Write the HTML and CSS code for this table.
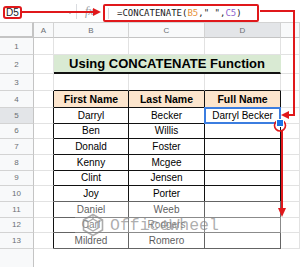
FILE: index.html
```html
<!DOCTYPE html>
<html>
<head>
<meta charset="utf-8">
<link rel="stylesheet" href="styles.css">
</head>
<body>
<div class="app">
  <div class="toolbar">
    <div class="namebox">D5</div>
    <div class="dd"></div>
    <div class="sep"></div>
    <div class="fx">fx</div>
    <div class="formula"><span class="fsep"></span><span class="ftext">=CONCATENATE(<span class="r1">B5</span>," ",<span class="r2">C5</span>)</span></div>
  </div>
  <div class="sheet">
    <div class="c corner"></div><div class="c ch">A</div><div class="c ch">B</div><div class="c ch">C</div><div class="c ch hsel">D</div><div class="c ch"></div>

    <div class="c rh">1</div><div class="c"></div><div class="c"></div><div class="c"></div><div class="c"></div><div class="c"></div>

    <div class="c rh">2</div><div class="c"></div><div class="c title">Using CONCATENATE Function</div><div class="c"></div>

    <div class="c rh">3</div><div class="c"></div><div class="c tt"></div><div class="c tt"></div><div class="c tt"></div><div class="c"></div>

    <div class="c rh">4</div><div class="c tl"></div><div class="c t hd">First Name</div><div class="c t hd">Last Name</div><div class="c t hd">Full Name</div><div class="c"></div>

    <div class="c rh hsel">5</div><div class="c tl"></div><div class="c t">Darryl</div><div class="c t">Becker</div><div class="c t cur">Darryl Becker</div><div class="c"></div>

    <div class="c rh">6</div><div class="c tl"></div><div class="c t">Ben</div><div class="c t">Willis</div><div class="c t"></div><div class="c"></div>

    <div class="c rh">7</div><div class="c tl"></div><div class="c t">Donald</div><div class="c t">Foster</div><div class="c t"></div><div class="c"></div>

    <div class="c rh">8</div><div class="c tl"></div><div class="c t">Kenny</div><div class="c t">Mcgee</div><div class="c t"></div><div class="c"></div>

    <div class="c rh">9</div><div class="c tl"></div><div class="c t">Clint</div><div class="c t">Jensen</div><div class="c t"></div><div class="c"></div>

    <div class="c rh">10</div><div class="c tl"></div><div class="c t">Joy</div><div class="c t">Porter</div><div class="c t"></div><div class="c"></div>

    <div class="c rh">11</div><div class="c tl"></div><div class="c t">Daniel</div><div class="c t">Weeb</div><div class="c t"></div><div class="c"></div>

    <div class="c rh">12</div><div class="c tl"></div><div class="c t">Carl</div><div class="c t">Rodgers</div><div class="c t"></div><div class="c"></div>

    <div class="c rh">13</div><div class="c tl"></div><div class="c t">Mildred</div><div class="c t">Romero</div><div class="c t"></div><div class="c"></div>

    <div class="c rh filler"></div><div class="blank"></div>
  </div>

  <div class="wm">
    <div class="wm-band"></div>
    <svg class="wm-logo" viewBox="0 0 24 24" width="24" height="24">
      <polygon points="12,1.5 21.5,7 21.5,17 12,22.5 2.5,17 2.5,7" fill="none" stroke="#8a8a8a" stroke-width="1.6"/>
      <polygon points="12,6 17,9 17,15 12,18 7,15 7,9" fill="none" stroke="#8a8a8a" stroke-width="1.4"/>
      <path d="M12 1.5 L12 6 M21.5 7 L17 9 M2.5 7 L7 9" stroke="#8a8a8a" stroke-width="1.2" fill="none"/>
    </svg>
    <span class="wm-text">OfficeWheel</span>
  </div>

  <svg class="ann" width="300" height="267" viewBox="0 0 300 267">
    <line x1="22" y1="12" x2="94" y2="12" stroke="#e0181b" stroke-width="2"/>
    <polygon points="93,8 101,12 93,16" fill="#e0181b"/>
    <polyline points="260,11 294,11 294,115 288,115" fill="none" stroke="#e0181b" stroke-width="2"/>
    <polygon points="289,111 281,115 289,119" fill="#e0181b"/>
    <circle cx="280" cy="125.5" r="5.5" fill="none" stroke="#e0181b" stroke-width="1.6"/>
    <line x1="282" y1="131" x2="282" y2="209" stroke="#e0181b" stroke-width="2"/>
    <polygon points="278,208 282,217 286,208" fill="#e0181b"/>
  </svg>
</div>
</body>
</html>
```
FILE: styles.css
```css
* { box-sizing: border-box; margin: 0; padding: 0; }
html, body { width: 300px; height: 267px; overflow: hidden; background: #fff; }
body { font-family: "Liberation Sans", Arial, sans-serif; color: #000; }
.app { position: relative; width: 300px; height: 267px; }

.toolbar { display: flex; align-items: flex-start; height: 22px; }
.namebox {
  margin: 6px 0 0 3px; width: 19px; height: 13px;
  border: 2px solid #e0181b; border-radius: 3px;
  font-size: 10px; line-height: 9px; text-align: center; color: #202124;
}
.dd {
  margin: 11px 0 0 46px; width: 0; height: 0;
  border-left: 2.5px solid transparent; border-right: 2.5px solid transparent;
  border-top: 3px solid #5f6368;
}
.sep { margin: 4px 0 0 4px; width: 1px; height: 15px; background: #dadce0; }
.fx {
  margin: 4px 0 0 8px; width: 12px; font-family: "Liberation Serif", serif;
  font-style: italic; font-size: 12px; color: #9aa0a6;
}
.formula {
  margin: 4px 0 0 6px; width: 156px; height: 18px;
  border: 2px solid #e0181b; border-radius: 2px;
  display: flex; align-items: center;
}
.fsep { margin-left: 3px; width: 1px; height: 11px; background: #dadce0; }
.ftext {
  margin-left: 8px; font-family: "DejaVu Sans Mono", monospace; font-size: 9px;
  color: #222; white-space: pre;
}
.r1 { color: #e69138; }
.r2 { color: #8e63ce; }

.sheet {
  display: grid;
  grid-template-columns: 34px 20px 75px 76px 76px 19px;
  grid-template-rows: 16px 17px 19px 17px 17px repeat(9, 15.67px) 1fr;
  height: 245px;
}
.c {
  border-right: 1px solid #e2e2e2; border-bottom: 1px solid #e2e2e2;
  font-size: 10px; display: flex; align-items: center; justify-content: center;
  white-space: nowrap; overflow: hidden;
}
.ch {
  background: #f8f9fa; border-right-color: #d3d3d3; border-bottom-color: #c4c4c4;
  border-top: 1px solid #d3d3d3; color: #6b6f73; font-size: 8px;
}
.corner { background: #f8f9fa; border-top: 1px solid #d3d3d3; border-right: 2px solid #c4c4c4; border-bottom: 2px solid #c4c4c4; }
.rh {
  background: #f8f9fa; border-right-color: #c4c4c4; border-bottom-color: #d3d3d3;
  color: #6b6f73; font-size: 8px;
}
.hsel { background: #e3e5e8; }
.filler { border-bottom: none; }
.blank { grid-column: span 5; }

.tl { border-right-color: #111; }
.tt { border-bottom-color: #111; }
.t { border-right-color: #111; border-bottom-color: #111; }
.hd { background: #fce5cd; font-weight: bold; font-size: 10.5px; }
.title {
  grid-column: span 3; background: #d9ead3; border-right-color: #d9ead3;
  border-bottom: 2px solid #111; font-weight: bold; font-size: 13px;
}
.cur { position: relative; overflow: visible; }
.cur::after {
  content: ""; position: absolute; left: -1px; top: -1px; right: -1px; bottom: -1px;
  border: 2px solid #3b7de0;
}
.cur::before {
  content: ""; position: absolute; right: -4px; bottom: -4px; width: 6px; height: 6px;
  background: #1a73e8; border: 1px solid #fff; z-index: 2;
}

.wm {
  position: absolute; left: 54px; top: 201px; width: 228px; height: 49px;
  background: rgba(255, 255, 255, 0.35);
}
.wm-band {
  position: absolute; left: 21px; top: 16px; width: 207px; height: 16px;
  background: rgba(255, 255, 255, 0.25);
}
.wm-logo { position: absolute; left: 27px; top: 12px; opacity: 0.7; }
.wm-text {
  position: absolute; left: 56px; top: 17px;
  font-family: "Liberation Mono", monospace; font-size: 16.5px; line-height: 16px;
  color: rgba(120, 120, 120, 0.6);
}

.ann { position: absolute; left: 0; top: 0; pointer-events: none; }
```
